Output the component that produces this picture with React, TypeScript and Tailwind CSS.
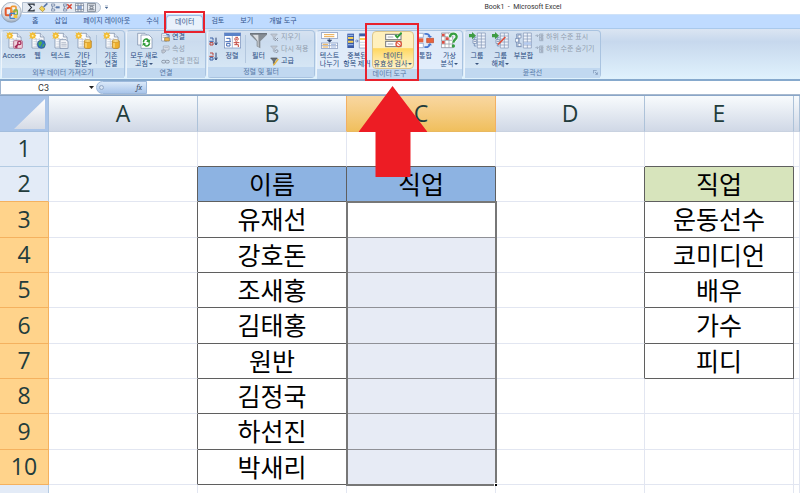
import React from 'react';
import clsx from 'clsx';

const ROWS = [1, 2, 3, 4, 5, 6, 7, 8, 9, 10, 11];
const COLUMNS = ['A', 'B', 'C', 'D', 'E', 'F'];

const CELLS: Record<string, string> = {
  B2: '이름',
  C2: '직업',
  E2: '직업',
  B3: '유재선',
  B4: '강호돈',
  B5: '조새홍',
  B6: '김태홍',
  B7: '원반',
  B8: '김정국',
  B9: '하선진',
  B10: '박새리',
  E3: '운동선수',
  E4: '코미디언',
  E5: '배우',
  E6: '가수',
  E7: '피디',
};

// Icons
const Sparkle = () => (
  <>
    <path d="M1 1l6 3 4-4 4 4 6-3-3 6 4 4-4 4 3 6-6-3-4 4-4-4-6 3 3-6-3-4 3-4z" fill="#f3bd35" />
    <circle cx="11" cy="11" r="3" fill="#fff3b0" />
  </>
);

const SheetIcon: React.FC<{ children?: React.ReactNode }> = ({ children }) => (
  <svg className="size-[17px]" viewBox="0 0 51 51">
    <path d="M9 4h25l11 11v33H9z" fill="#fbfcfe" stroke="#7486a5" strokeWidth="2" />
    <path d="M34 4v11h11" fill="#dfe6f1" stroke="#7486a5" strokeWidth="2" />
    <path d="M13 22h28M13 29h28M13 36h28M13 43h28M22 18v26M31 18v26" stroke="#bcc5d4" strokeWidth="2" />
    <Sparkle />
    {children}
  </svg>
);

const Cylinder = () => (
  <>
    <path d="M28 27v19c0 5 21 5 21 0V27z" fill="#efb02c" stroke="#b07a1b" strokeWidth="2" />
    <ellipse cx="38" cy="27" rx="10" ry="4" fill="#fde08a" stroke="#c08a25" strokeWidth="2" />
    <path d="M33 33v14" stroke="#ffe9a0" strokeWidth="3" />
  </>
);

const AccessIcon = () => (
  <SheetIcon>
    <rect x="23" y="26" width="26" height="23" rx="3" fill="#f0d3dd" stroke="#a94367" strokeWidth="2" />
    <circle cx="40" cy="33" r="5" fill="none" stroke="#a52a58" strokeWidth="4" />
    <path d="M36 37L27 46M30 43l4 4" stroke="#a52a58" strokeWidth="5" />
  </SheetIcon>
);

const WebIcon = () => (
  <SheetIcon>
    <circle cx="37" cy="37" r="12" fill="#2f74c0" stroke="#24558f" strokeWidth="2" />
    <path d="M28 33c4-8 10-5 11-1s-4 4-4 9-6 2-7-8zM41 38l6-3-2 8-5 3z" fill="#4fae4b" />
  </SheetIcon>
);

const TextIcon = () => (
  <SheetIcon>
    <path d="M24 23h18l6 6v20H24z" fill="#f2f4f8" stroke="#7486a5" strokeWidth="2" />
    <path d="M28 32h14M28 37h16M28 42h16" stroke="#98a3b6" strokeWidth="2" />
  </SheetIcon>
);

const RefreshIcon = () => (
  <svg className="size-[17px]" viewBox="0 0 51 51">
    <path d="M5 4h22l6 6v29H5z" fill="#f6f8fb" stroke="#7486a5" strokeWidth="2" />
    <path d="M15 9h24l9 9v31H15z" fill="#fff" stroke="#7486a5" strokeWidth="2" />
    <path d="M20 30c1-13 16-14 19-6l4-2-2 12-11-6 4-2c-3-5-9-3-9 4z" fill="#2f9b38" />
    <path d="M43 34c-2 13-16 13-20 5l-4 3 2-11 10 5-4 2c3 4 10 2 11-4z" fill="#2f9b38" />
  </svg>
);

const SortIcon = () => (
  <svg className="size-[17px]" viewBox="0 0 51 51">
    <rect x="1" y="3" width="49" height="45" fill="#fff" stroke="#6c87b8" strokeWidth="2" />
    <path d="M1 3h49v9H1z" fill="#5a82c8" />
    <path d="M25 12v35" stroke="#7e95bd" strokeWidth="2" />
    <path d="M7 19h11v8M4 29h17M8 34h10v8H8z" fill="none" stroke="#3f68b5" strokeWidth="3" />
    <path d="M34 16h8M30 21h15M46 32H29M37 32v5" fill="none" stroke="#c2453d" strokeWidth="3" />
    <circle cx="37" cy="26" r="3" fill="none" stroke="#c2453d" strokeWidth="2" />
    <path d="M31 38h12v7" fill="none" stroke="#c2453d" strokeWidth="3" />
  </svg>
);

const FunnelIcon = () => (
  <svg className="size-[17px]" viewBox="0 0 51 51">
    <path d="M0 3h51v5L31 28v21l-11-6V28L0 8z" fill="#868d94" />
    <path d="M8 8h17l1 37-3-3V27z" fill="#dadde1" />
    <path d="M0 3h51v4H0z" fill="#6d757e" />
  </svg>
);

const SplitIcon = () => (
  <svg className="size-[17px]" viewBox="0 0 51 51">
    <rect x="1" y="2" width="49" height="17" fill="#fff" stroke="#7b90b7" strokeWidth="2" />
    <path d="M9 8h31M9 14h31" stroke="#e9a94b" strokeWidth="3" />
    <path d="M25 19v6M19 24h13l-6 7z" fill="#34456b" stroke="#34456b" strokeWidth="2" />
    <rect x="1" y="33" width="49" height="16" fill="#fff" stroke="#7b90b7" strokeWidth="2" />
    <path d="M25 33v16M1 41h49" stroke="#7b90b7" strokeWidth="2" />
    <path d="M5 37h16M5 45h16" stroke="#e9a94b" strokeWidth="3" />
    <path d="M30 37h15M30 45h15" stroke="#9db6e2" strokeWidth="3" />
  </svg>
);

const DuplicateIcon = () => (
  <svg className="h-[17px] w-5" viewBox="0 0 60 51">
    <path d="M1 5h20v43H1z" fill="#3c5ba6" />
    <path d="M3 10h16M3 38h16" stroke="#8fb0e8" strokeWidth="4" />
    <path d="M3 18h16M3 29h16" stroke="#f4cf57" strokeWidth="6" />
    <path d="M24 27h8M29 23l5 4-5 4" fill="none" stroke="#3c5ba6" strokeWidth="2" />
    <path d="M37 5h22v43H37z" fill="#fff" stroke="#7389b5" strokeWidth="2" />
    <path d="M37 5h22v8H37z" fill="#3c5ba6" />
    <path d="M38 21h20" stroke="#f4cf57" strokeWidth="6" />
    <path d="M38 31h20M38 39h20" stroke="#aebbd3" strokeWidth="2" />
  </svg>
);

const ValidationIcon = () => (
  <svg className="size-[17px]" viewBox="0 0 51 51">
    <rect x="2" y="7" width="46" height="16" fill="#fff" stroke="#74777c" strokeWidth="3" />
    <rect x="2" y="28" width="46" height="16" fill="#fff" stroke="#74777c" strokeWidth="3" />
    <path d="M8 15h17M8 36h17" stroke="#a3a9b2" strokeWidth="3" />
    <path d="M31 9l6 7L50 2" fill="none" stroke="#2f9b38" strokeWidth="6" />
    <circle cx="41" cy="36" r="8" fill="#fff" stroke="#de5237" strokeWidth="4" />
    <path d="M35 31l12 10" stroke="#de5237" strokeWidth="3" />
  </svg>
);

const ConsolidateIcon = () => (
  <svg className="size-[17px]" viewBox="0 0 51 51">
    <path d="M1 4h18v12H1zM1 34h18v13H1z" fill="#fff" stroke="#7c93bd" strokeWidth="2" />
    <path d="M1 19h18v12H1z" fill="#e8623c" />
    <path d="M29 19h21v13H29z" fill="#e8623c" stroke="#b8482c" strokeWidth="2" />
    <path d="M22 6c9-2 14 1 16 7M22 45c9 2 14-1 16-7" fill="none" stroke="#4777d1" strokeWidth="5" />
    <path d="M31 12h14l-6 6zM31 40h14l-6-7z" fill="#4777d1" />
  </svg>
);

const WhatIfIcon = () => (
  <svg className="size-[17px]" viewBox="0 0 51 51">
    <path d="M1 3h34v44H1z" fill="#fff" stroke="#7a7f8c" strokeWidth="2" />
    <path d="M1 14h34M1 25h34M1 36h34M12 3v44M24 3v44" stroke="#8c919c" strokeWidth="2" />
    <path d="M3 5h8v8H3zM14 16h9v8h-9zM3 27h8v8H3z" fill="#dc4d42" />
    <path d="M27 16c0-15 20-14 20-2 0 9-10 8-10 18" fill="none" stroke="#fff" strokeWidth="11" />
    <path d="M27 16c0-15 20-14 20-2 0 9-10 8-10 18" fill="none" stroke="#379e42" strokeWidth="7" />
    <circle cx="37" cy="42" r="5" fill="#379e42" />
  </svg>
);

const OutlineIcon: React.FC<{ variant: 'group' | 'ungroup' | 'subtotal' }> = ({ variant }) => (
  <svg className="size-[17px]" viewBox="0 0 51 51">
    <path d="M25 3h24v45H25z" fill="#eef3fb" stroke="#7f92b4" strokeWidth="2" />
    <path d="M25 12h24M25 21h24M25 30h24M25 39h24M37 3v45" stroke="#7f92b4" strokeWidth="2" />
    {variant === 'subtotal' ? (
      <>
        <path d="M20 6H5v38h15M12 14v24M5 25h7" fill="none" stroke="#637ba8" strokeWidth="2" />
        <path d="M1 20h10v10H1zM9 9h9v9H9zM9 34h9v9H9z" fill="#fff" stroke="#637ba8" strokeWidth="2" />
        <path d="M27 31h21v7H27z" fill="#b4cbf0" />
      </>
    ) : (
      <>
        <path d="M0 6h9V0l12 11L9 22v-6H0z" fill="#3f9c44" />
        <path d="M22 16h-6v26h6" fill="none" stroke="#637ba8" strokeWidth="2" />
        <path d="M12 23h11v11H12z" fill="#fff" stroke="#637ba8" strokeWidth="2" />
        <path d="M14 28h7" stroke="#3e598f" strokeWidth="2" />
      </>
    )}
    {variant === 'ungroup' && <path d="M18 38L40 15" stroke="#e05140" strokeWidth="5" />}
  </svg>
);

const SmallSortIcon: React.FC<{ flipped?: boolean }> = ({ flipped }) => (
  <svg className="size-[9px]" viewBox="0 0 27 27">
    <path d="M3 3h9v7M1 13h13" fill="none" stroke={flipped ? '#b9443c' : '#3d62a8'} strokeWidth="3" />
    <path d="M3 17h9v7H3z" fill="none" stroke={flipped ? '#3d62a8' : '#b9443c'} strokeWidth="3" />
    <path d="M21 2v19M17 17l4 7 4-7" fill="none" stroke="#2c4270" strokeWidth="3" />
  </svg>
);

const LinkSheetIcon = () => (
  <svg className="size-[9px]" viewBox="0 0 27 27">
    <path d="M2 2h16v22H2z" fill="#fff" stroke="#7789a8" strokeWidth="2" />
    <path d="M5 8h10M5 13h10" stroke="#93a1b8" strokeWidth="2" />
    <path d="M11 14h14v10H11z" fill="#f2b94f" stroke="#8c7140" strokeWidth="2" />
    <path d="M16 5h8v8" fill="none" stroke="#446cb5" strokeWidth="3" />
  </svg>
);

const PropertiesIcon = () => (
  <svg className="size-[9px]" viewBox="0 0 27 27">
    <path d="M7 3h17v12H7z" fill="#dfe4ec" stroke="#9ba5b5" strokeWidth="2" />
    <path d="M10 8h11" stroke="#9ba5b5" strokeWidth="2" />
    <path d="M2 15h8l5 3-6 6H3z" fill="#c2c8d2" stroke="#98a1b0" strokeWidth="2" />
  </svg>
);

const ChainIcon = () => (
  <svg className="size-[9px]" viewBox="0 0 27 27">
    <rect x="2" y="10" width="12" height="8" rx="4" fill="none" stroke="#8f9aab" strokeWidth="3" />
    <rect x="13" y="10" width="12" height="8" rx="4" fill="none" stroke="#8f9aab" strokeWidth="3" />
  </svg>
);

const SmallFunnelIcon: React.FC<{ kind: 'clear' | 'reapply' | 'advanced' }> = ({ kind }) => (
  <svg className="size-[9px]" viewBox="0 0 27 27">
    <path
      d="M2 3h20L14 12v10l-4-3v-7z"
      fill={kind === 'advanced' ? '#6d7278' : '#c3c9d3'}
      stroke={kind === 'advanced' ? '#4c5157' : '#9fa9b8'}
      strokeWidth="2"
    />
    {kind === 'clear' && <path d="M15 15l9 9M24 15l-9 9" stroke="#8f99a9" strokeWidth="3" />}
    {kind === 'reapply' && <path d="M16 18c1-5 8-5 8 0s-6 6-8 3" fill="none" stroke="#8f99a9" strokeWidth="3" />}
    {kind === 'advanced' && <path d="M25 6L13 21l-3 4" fill="none" stroke="#e4b33b" strokeWidth="4" />}
  </svg>
);

const DetailIcon = () => (
  <svg className="size-[9px]" viewBox="0 0 27 27">
    <path d="M1 8h8M6 4l4 4-4 4" fill="none" stroke="#8d9aae" strokeWidth="2" />
    <path d="M25 3H14v20h11M14 13h11" fill="none" stroke="#8d9aae" strokeWidth="2" />
    <path d="M18 6h6v4h-6zM18 16h6v4h-6z" fill="#d3dae5" stroke="#8d9aae" strokeWidth="2" />
  </svg>
);

const Caret = () => (
  <svg className="ml-px inline-block h-[2px] w-1 align-middle" viewBox="0 0 8 4">
    <path d="M0 0h8L4 4z" fill="#39547f" />
  </svg>
);

const OfficeLogo = () => (
  <svg className="size-[21px]" viewBox="0 0 63 63">
    <defs>
      <radialGradient id="orb" cx="50%" cy="30%" r="75%">
        <stop offset="0" stopColor="#ffffff" />
        <stop offset="60%" stopColor="#dde3ea" />
        <stop offset="1" stopColor="#8d9cb0" />
      </radialGradient>
    </defs>
    <circle cx="31" cy="31" r="30" fill="url(#orb)" stroke="#8595ab" strokeWidth="2" />
    <rect x="14" y="19" width="17" height="21" rx="3" fill="none" stroke="#e2592b" strokeWidth="6" />
    <rect x="31" y="13" width="14" height="16" rx="3" fill="none" stroke="#f09a36" strokeWidth="5" />
    <rect x="39" y="24" width="10" height="14" rx="2" fill="none" stroke="#79b044" strokeWidth="4" />
    <rect x="27" y="34" width="14" height="15" rx="2" fill="none" stroke="#4280c9" strokeWidth="4" />
    <rect x="38" y="38" width="11" height="10" fill="#f4c43c" />
  </svg>
);

// Quick access toolbar
const QuickAccess = () => (
  <div className="flex items-center gap-[3px] rounded-r-full border border-[#b4c1d1] bg-[#e3e9f1] px-1">
    <button aria-label="합계">
      <svg className="size-[9px]" viewBox="0 0 24 24">
        <path d="M19 7V3H4l8 9-8 9h15v-4" fill="none" stroke="#222a35" strokeWidth="3" />
      </svg>
    </button>
    <button aria-label="서식 복사">
      <svg className="size-[9px]" viewBox="0 0 27 27">
        <path d="M25 1L14 12" stroke="#5876a8" strokeWidth="5" />
        <path d="M8 9l10 9-7 8L1 17z" fill="#f2d257" stroke="#a4862b" strokeWidth="2" />
      </svg>
    </button>
    <button aria-label="그룹">
      <svg className="size-[9px]" viewBox="0 0 27 27">
        <path d="M1 3h10v6H1zM1 18h10v6H1zM4 9v9M11 13h4" fill="none" stroke="#5d7299" strokeWidth="2" />
        <path d="M15 10h11v6H15z" fill="#5878ac" />
      </svg>
    </button>
    <button aria-label="그룹 해제">
      <svg className="size-[9px]" viewBox="0 0 27 27">
        <path d="M1 3h10v6H1zM1 18h10v6H1zM4 9v9M11 13h13" fill="none" stroke="#5d7299" strokeWidth="2" />
        <path d="M13 4l13 13M26 4L13 17" stroke="#d9412f" strokeWidth="4" />
      </svg>
    </button>
    <button aria-label="표">
      <svg className="size-[9px]" viewBox="0 0 27 27">
        <path d="M1 2h25v23H1z" fill="#fff" stroke="#5a6a84" strokeWidth="2" />
        <path d="M1 8h25M1 19h25M9 2v23M18 2v23" stroke="#5a6a84" strokeWidth="2" />
        <path d="M7 9h13v9H7z" fill="#86a3d3" />
      </svg>
    </button>
    <button aria-label="양식">
      <svg className="size-[9px]" viewBox="0 0 27 27">
        <path d="M1 2h25v23H1z" fill="#e9edf3" stroke="#4c5665" strokeWidth="2" />
        <path d="M5 7h17M5 20h17M9 11h9v6H9z" fill="none" stroke="#4c5665" strokeWidth="2" />
      </svg>
    </button>
  </div>
);

// Ribbon pieces
interface RibbonGroupProps {
  label: string;
  active?: boolean;
  launcher?: boolean;
  children: React.ReactNode;
}

const RibbonGroup: React.FC<RibbonGroupProps> = ({ label, active, launcher, children }) => (
  <section
    className={clsx(
      'flex shrink-0 flex-col rounded-sm border border-[#a9c3e0] border-l-[#edf4fb]',
      active ? 'bg-[#e3eefb]/80' : 'bg-[#d3e0f0]/40'
    )}
  >
    <div className="flex h-[38px]">{children}</div>
    <h2 className="relative h-[10px] bg-[#c1d8f0] text-center leading-[10px] text-[#5577a6]">
      {label}
      {launcher && (
        <svg className="absolute top-[2px] right-[2px] size-[5px]" viewBox="0 0 15 15">
          <path d="M1 10V1h10M6 6l7 7M13 7v6H7" fill="none" stroke="#7089ac" strokeWidth="2" />
        </svg>
      )}
    </h2>
  </section>
);

interface BigButtonProps {
  icon: React.ReactNode;
  lines: string[];
  width: string;
  caret?: boolean;
}

const BigButton: React.FC<BigButtonProps> = ({ icon, lines, width, caret }) => (
  <button className={clsx('flex shrink-0 flex-col items-center gap-[3px] pt-px leading-2 whitespace-nowrap', width)}>
    {icon}
    <span>
      {lines.map((line, i) => (
        <span key={i} className="block">
          {line}
          {caret && i === lines.length - 1 && <Caret />}
        </span>
      ))}
    </span>
  </button>
);

interface SmallButtonProps {
  icon: React.ReactNode;
  label: string;
  disabled?: boolean;
}

const SmallButton: React.FC<SmallButtonProps> = ({ icon, label, disabled }) => (
  <button
    disabled={disabled}
    className={clsx('flex h-3 items-center gap-[2px] whitespace-nowrap', disabled && 'text-[#929eaf]')}
  >
    {icon}
    {label}
  </button>
);

const Divider = () => <div className="mx-px my-1 w-px shrink-0 bg-[#b3c7de]" />;

const TABS = ['홈', '삽입', '페이지 레이아웃', '수식', '데이터', '검토', '보기', '개발 도구'];

const TabBar = () => (
  <nav className="flex h-[14px] items-stretch border-t border-[#cfe2f8] bg-[#bfdbff] pl-6 text-[#31538c]">
    {TABS.map((tab) =>
      tab === '데이터' ? (
        <button
          key={tab}
          className="relative z-10 -mb-px -ml-px rounded-t-sm border border-b-0 border-[#9dbce4] bg-[#e9f1fb] px-2"
        >
          {tab}
          <span className="absolute -inset-x-[3px] -top-[5px] -bottom-1 border-2 border-[#e8222e]" />
        </button>
      ) : (
        <button key={tab} className="px-2">
          {tab}
        </button>
      )
    )}
  </nav>
);

const ValidationButton = () => (
  <div className="relative flex w-[42px] shrink-0">
    <button className="flex w-full flex-col items-center gap-[3px] rounded-sm border border-[#dcc58a] bg-linear-to-b from-[#fff0bd] from-45% via-[#ffd75d] via-46% to-[#fff4c9] leading-2 whitespace-nowrap">
      <ValidationIcon />
      <span>
        <span className="block">데이터</span>
        <span className="block">
          유효성 검사
          <Caret />
        </span>
      </span>
    </button>
    <span className="pointer-events-none absolute -top-2 -right-[5px] -bottom-3 -left-[7px] z-10 border-2 border-[#e8222e]" />
    <svg
      className="pointer-events-none absolute top-[55px] left-1/2 z-20 h-[92px] w-[69px] -translate-x-1/2"
      viewBox="0 0 69 92"
    >
      <path d="M34 0L69 46H52v45H17V46H0z" fill="#ed1c24" />
    </svg>
  </div>
);

const Ribbon = () => (
  <div className="flex h-[53px] gap-px border-t border-b-2 border-t-[#a9c9ec] border-b-[#86a9cd] bg-linear-to-b from-[#dbe5f2] via-[#c7d8ed] via-25% to-[#e0f2fd] pt-px pb-px pl-px text-[#284a80]">
    <RibbonGroup label="외부 데이터 가져오기">
      <BigButton icon={<AccessIcon />} lines={['Access']} width="w-6" />
      <BigButton icon={<WebIcon />} lines={['웹']} width="w-[23px]" />
      <BigButton icon={<TextIcon />} lines={['텍스트']} width="w-[23px]" />
      <BigButton icon={<SheetIcon><Cylinder /></SheetIcon>} lines={['기타', '원본']} width="w-[23px]" caret />
      <Divider />
      <BigButton icon={<SheetIcon><Cylinder /></SheetIcon>} lines={['기존', '연결']} width="w-[26px]" />
    </RibbonGroup>
    <RibbonGroup label="연결">
      <BigButton icon={<RefreshIcon />} lines={['모두 새로', '고침']} width="w-[34px]" caret />
      <div className="w-11">
        <SmallButton icon={<LinkSheetIcon />} label="연결" />
        <SmallButton icon={<PropertiesIcon />} label="속성" disabled />
        <SmallButton icon={<ChainIcon />} label="연결 편집" disabled />
      </div>
    </RibbonGroup>
    <RibbonGroup label="정렬 및 필터">
      <div className="flex w-3 flex-col justify-center gap-[6px] pl-px">
        <button aria-label="오름차순 정렬">
          <SmallSortIcon />
        </button>
        <button aria-label="내림차순 정렬">
          <SmallSortIcon flipped />
        </button>
      </div>
      <BigButton icon={<SortIcon />} lines={['정렬']} width="w-6" />
      <Divider />
      <BigButton icon={<FunnelIcon />} lines={['필터']} width="w-[23px]" />
      <div className="w-11">
        <SmallButton icon={<SmallFunnelIcon kind="clear" />} label="지우기" disabled />
        <SmallButton icon={<SmallFunnelIcon kind="reapply" />} label="다시 적용" disabled />
        <SmallButton icon={<SmallFunnelIcon kind="advanced" />} label="고급" />
      </div>
    </RibbonGroup>
    <RibbonGroup label="데이터 도구" active>
      <BigButton icon={<SplitIcon />} lines={['텍스트', '나누기']} width="w-[25px]" />
      <BigButton icon={<DuplicateIcon />} lines={['중복된', '항목 제거']} width="w-[30px]" />
      <ValidationButton />
      <BigButton icon={<ConsolidateIcon />} lines={['통합']} width="w-[23px]" />
      <BigButton icon={<WhatIfIcon />} lines={['가상', '분석']} width="w-[25px]" caret />
    </RibbonGroup>
    <RibbonGroup label="윤곽선" launcher>
      <BigButton icon={<OutlineIcon variant="group" />} lines={['그룹', '']} width="w-6" caret />
      <BigButton icon={<OutlineIcon variant="ungroup" />} lines={['그룹', '해제']} width="w-[23px]" caret />
      <BigButton icon={<OutlineIcon variant="subtotal" />} lines={['부분합']} width="w-[23px]" />
      <div className="w-[65px]">
        <SmallButton icon={<DetailIcon />} label="하위 수준 표시" disabled />
        <SmallButton icon={<DetailIcon />} label="하위 수준 숨기기" disabled />
      </div>
    </RibbonGroup>
  </div>
);

const FormulaBar = () => (
  <div className="flex h-[13px] bg-white">
    <input
      aria-label="이름 상자"
      defaultValue="C3"
      className="w-[86px] border-l border-[#9db3cf] bg-white text-center text-[9px] leading-3 text-[#333] outline-none"
    />
    <button aria-label="이름 목록" className="flex w-[10px] items-center justify-center">
      <svg className="h-[3px] w-[5px]" viewBox="0 0 10 6">
        <path d="M0 0h10L5 6z" fill="#222" />
      </svg>
    </button>
    <div className="flex w-[51px] items-center justify-between rounded-l-full border border-[#9db9dc] bg-linear-to-b from-[#dbe9f9] to-[#a9c5ea] pr-1 pl-[2px]">
      <span className="size-[5px] rounded-full border border-[#93a9c6] bg-[#d7e3f2]" />
      <button aria-label="함수 삽입" className="font-serif text-[8px] leading-2 text-[#3f4e66] italic">
        fx
      </button>
    </div>
    <input aria-label="수식 입력줄" className="min-w-0 flex-1 bg-white px-1 outline-none" />
  </div>
);

// Worksheet grid
const inNames = (col: string, row: number) => 'BC'.includes(col) && row >= 2 && row <= 10;
const inJobs = (col: string, row: number) => col === 'E' && row >= 2 && row <= 7;

const cellClass = (col: string, row: number) => {
  const next = COLUMNS[COLUMNS.indexOf(col) + 1] ?? '';
  const framed = inNames(col, row) || inJobs(col, row);
  const darkRight = framed || (next !== '' && (inNames(next, row) || inJobs(next, row)));
  const darkBottom = framed || inNames(col, row + 1) || inJobs(col, row + 1);
  return clsx(
    'border-r border-b p-0 pb-[3px] text-center font-normal text-black',
    darkRight ? 'border-r-[#5f5f5f]' : 'border-r-[#e2e6f1]',
    darkBottom ? (col === 'C' && row >= 3 ? 'border-b-[#8f9096]' : 'border-b-[#5f5f5f]') : 'border-b-[#e2e6f1]',
    row === 2 && 'BC'.includes(col) && 'bg-[#8db3e2]',
    row === 2 && col === 'E' && 'bg-[#d7e4bc]',
    col === 'C' && row >= 4 && row <= 10 && 'bg-[#e7ebf5]',
    col === 'C' && row === 3 && 'relative'
  );
};

const Sheet = () => (
  <table className="w-full table-fixed border-separate border-spacing-0 font-['Noto_Sans_CJK_KR',sans-serif] text-[25px] leading-7">
    <colgroup>
      <col className="w-[49px]" />
      <col className="w-[149px]" />
      <col className="w-[149px]" />
      <col className="w-[149px]" />
      <col className="w-[149px]" />
      <col className="w-[149px]" />
      <col />
    </colgroup>
    <thead className="font-['Open_Sans','Noto_Sans',sans-serif] text-[23px]">
      <tr className="h-9">
        <th className="border-r border-b border-[#a3bddd] bg-[#a9c4e9] p-0">
          <svg className="ml-auto h-8 w-[34px]" viewBox="0 0 34 32" aria-label="모두 선택">
            <defs>
              <linearGradient id="corner" x1="0" y1="0" x2="0" y2="1">
                <stop offset="0" stopColor="#fdfdfe" />
                <stop offset="1" stopColor="#d5dbe6" />
              </linearGradient>
            </defs>
            <path d="M31 1v30H0z" fill="url(#corner)" />
          </svg>
        </th>
        {COLUMNS.map((col) => (
          <th
            key={col}
            className={clsx(
              'overflow-hidden border-r border-b p-0 pb-[2px] font-normal text-[#223c3c]',
              col === 'C'
                ? 'border-r-[#f2b063] border-b-[#e9b960] bg-linear-to-b from-[#f9d7a0] to-[#f0bf5c]'
                : 'border-b-[#c9d2e0] bg-linear-to-b from-[#f8fbfd] to-[#d0d8e6]',
              col === 'B' && 'border-r-[#f2b063]',
              !'BC'.includes(col) && 'border-r-[#adc2d9]'
            )}
          >
            {col === 'F' ? '' : col}
          </th>
        ))}
      </tr>
    </thead>
    <tbody>
      {ROWS.map((row) => (
        <tr key={row} className="h-[35px] nth-[3n]:h-9">
          <th
            className={clsx(
              "border-r border-b p-0 pb-[2px] font-['Open_Sans','Noto_Sans',sans-serif] text-[23px] font-normal text-[#223c3c]",
              row >= 3 && row <= 10 ? 'border-[#f4b15f] bg-[#ffd38b]' : 'border-r-[#b4cbe3] bg-[#e3ebf7]',
              row === 2 && 'border-b-[#f4b15f]',
              (row === 1 || row === 11) && 'border-b-[#b4cbe3]'
            )}
          >
            {row === 11 ? '' : row}
          </th>
          {COLUMNS.map((col) => (
            <td key={col} className={cellClass(col, row)}>
              {CELLS[`${col}${row}`]}
              {col === 'C' && row === 3 && (
                <div className="pointer-events-none absolute -top-px -left-px z-10 h-[285px] w-[151px] border-2 border-[#777]">
                  <span className="absolute -right-[2px] -bottom-[2px] size-[3px] border-t border-l border-white bg-black" />
                </div>
              )}
            </td>
          ))}
        </tr>
      ))}
    </tbody>
  </table>
);

export default function App() {
  return (
    <div className="h-screen overflow-hidden bg-white font-['Roboto','Noto_Sans_CJK_KR',sans-serif] text-[7px]">
      <header className="relative">
        <div className="flex h-[14px] items-center pl-[22px]">
          <QuickAccess />
          <button aria-label="빠른 실행 도구 모음 사용자 지정" className="ml-1">
            <svg className="h-1 w-[3px]" viewBox="0 0 9 12">
              <path d="M0 2h9M0 6h9l-4 5z" fill="#46658f" stroke="#46658f" />
            </svg>
          </button>
          <h1 className="flex-1 pl-[138px] text-center leading-3 text-[#333]">Book1 &nbsp;-&nbsp; Microsoft Excel</h1>
        </div>
        <button aria-label="Office 단추" className="absolute top-[2px] left-[1px] z-10">
          <OfficeLogo />
        </button>
        <TabBar />
      </header>
      <Ribbon />
      <FormulaBar />
      <div className="h-[2px] border-y border-t-[#a7b9cf] border-b-[#8aa6c8] bg-[#dce8f6]" />
      <Sheet />
    </div>
  );
}
